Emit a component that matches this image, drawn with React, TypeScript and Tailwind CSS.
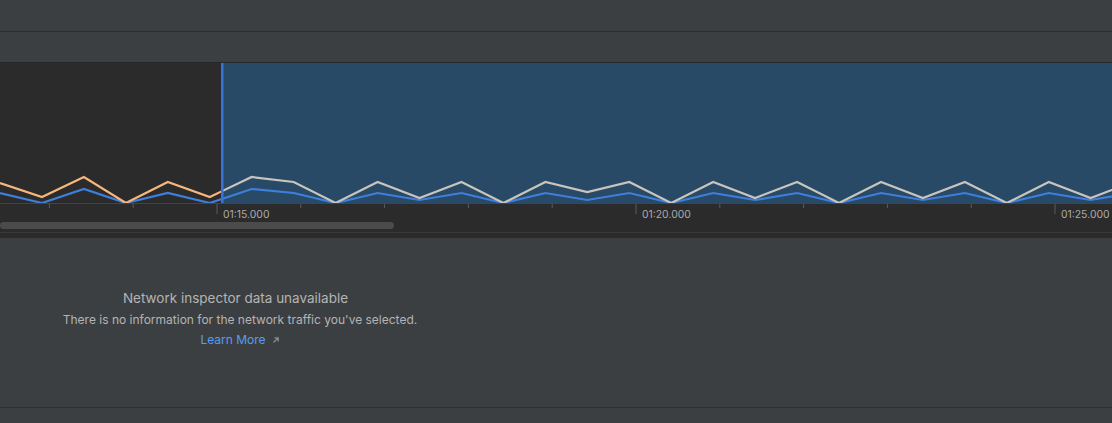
import React from 'react';

const STEP = 41.95;
const CHART_TOP = 63;
const SEL_X = 221;

// y positions in page coordinates, read off the reference
const upper = [183, 197, 177, 203, 182, 197, 177, 182, 203, 182, 198, 182, 203, 182, 192, 182, 203, 182, 198, 182, 203, 182, 198, 182, 203, 182, 198, 182];
const lower = [193, 203, 189, 203, 193, 203, 189, 193, 203, 193, 200, 193, 203, 193, 200, 193, 203, 193, 200, 193, 203, 193, 200, 193, 203, 193, 200, 193];

const toPoints = (vals: number[]) =>
  vals.map((v, i) => `${(i * STEP).toFixed(1)},${v - CHART_TOP}`).join(' ');

const ticks = Array.from({ length: 14 }, (_, i) => 49.4 + i * 83.8);
const labels = [
  { x: 217, text: '01:15.000' },
  { x: 636, text: '01:20.000' },
  { x: 1055, text: '01:25.000' },
];

const Chart: React.FC = () => (
  <svg width="1112" height="140" className="block">
    <defs>
      <clipPath id="left">
        <rect x="0" y="0" width={SEL_X} height="140" />
      </clipPath>
      <clipPath id="right">
        <rect x={SEL_X} y="0" width={1112 - SEL_X} height="140" />
      </clipPath>
    </defs>
    <rect x={SEL_X} y="0" width={1112 - SEL_X} height="140" fill="#284a67" />
    <polyline points={toPoints(lower)} fill="none" stroke="#3f7fdc" strokeWidth="2.2" />
    <polyline points={toPoints(upper)} fill="none" stroke="#f7b67c" strokeWidth="2.2" clipPath="url(#left)" />
    <polyline points={toPoints(upper)} fill="none" stroke="#c9c4bc" strokeWidth="2.2" clipPath="url(#right)" />
    <rect x={SEL_X} y="0" width="2.5" height="140" fill="#3873dc" />
  </svg>
);

const Axis: React.FC = () => (
  <svg width="1112" height="17" className="block">
    <line x1="0" y1="0.5" x2="1112" y2="0.5" stroke="#444444" />
    {ticks.map((x, i) => {
      const major = labels.some((l) => Math.abs(l.x - x) < 3);
      return (
        <line key={i} x1={x} y1="1" x2={x} y2={major ? 11 : 5} stroke="#5c5c5c" strokeWidth="1" />
      );
    })}
    {labels.map((l) => (
      <text
        key={l.text}
        x={l.x + 6}
        y="14.5"
        fill="#aaaaaa"
        fontSize="10.4"
        fontFamily="Inter, 'Noto Sans', sans-serif"
      >
        {l.text}
      </text>
    ))}
  </svg>
);

export default function App() {
  return (
    <div
      className="w-[1112px] h-[423px] overflow-hidden bg-[#3c3f41] flex flex-col"
      style={{ fontFamily: 'Inter, "Noto Sans", sans-serif' }}
    >
      {/* toolbars */}
      <div className="h-[32px] shrink-0 border-b border-[#2b2d2f]" />
      <div className="h-[30px] shrink-0" />

      {/* timeline */}
      <div className="shrink-0 border-t border-[#272727] bg-[#2b2b2b]">
        <Chart />
        <Axis />
        <div className="h-[12px] pt-[2px]">
          <div className="w-[394px] h-[7px] rounded-full bg-[#4b4b4b]" />
        </div>
        <div className="h-[6px] border-t border-[#3a3a3a]" />
      </div>

      {/* empty state */}
      <div className="flex-1 min-h-0 border-b border-[#2d2f31]">
        <div className="w-[480px] flex flex-col items-center pt-[52px]">
          <p className="text-[13.5px] leading-[16px] text-[#b4b4b4] pr-[9px]">Network inspector data unavailable</p>
          <p className="mt-[6px] text-[12px] leading-[16px] text-[#b4b4b4]">
            There is no information for the network traffic you've selected.
          </p>
          <p className="mt-[4px] text-[12px] leading-[16px] flex items-center gap-[6px]">
            <span className="text-[#5a9cf0]">Learn More</span>
            <svg width="8" height="8" viewBox="0 0 8 8">
              <path d="M1.5 6.5 L6 2 M2.5 1.8 H6.2 V5.5" fill="none" stroke="#8a8a8a" strokeWidth="1.3" />
            </svg>
          </p>
        </div>
      </div>
      <div className="h-[15px] shrink-0" />
    </div>
  );
}
